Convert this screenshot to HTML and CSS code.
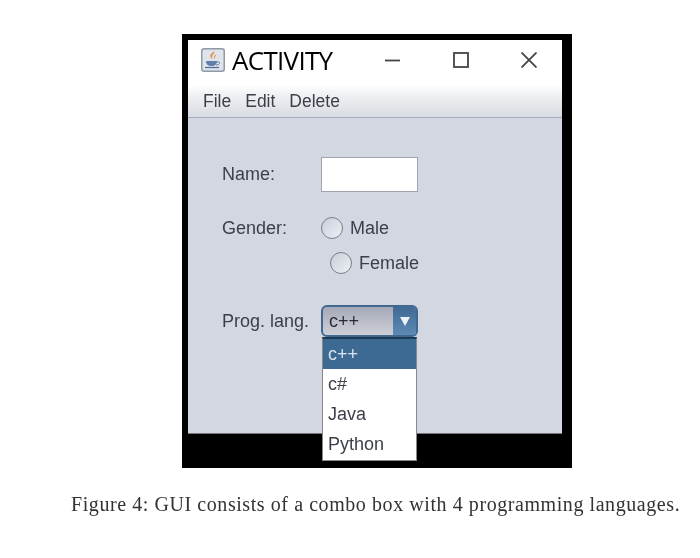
FILE: index.html
```html
<!DOCTYPE html>
<html lang="en">
<head>
    <meta charset="UTF-8">
    <title>ACTIVITY</title>
    <link rel="stylesheet" href="styles.css">
</head>
<body>
    <div class="window">
        <div class="titlebar">
            <svg class="app-icon" viewBox="0 0 24 24">
                <rect x="0.75" y="0.75" width="22.5" height="22.5" rx="2.5" fill="#dfe3ea" stroke="#8f9aa8" stroke-width="1.5"/>
                <path d="M13 3c1.500 2.500-3 4-2 6.500.4 1 1.200 1.500 1.200 1.500-2-.5-3.200-2-2.800-3.700C9.800 5.500 12.500 5 13 3z" fill="#dd8a3c"/>
                <path d="M15 6.500c.5 1.500-2 2.500-1.300 4.500-1.500-1-1.200-3 1.300-4.500z" fill="#dd8a3c"/>
                <path d="M5 13h11c0 3-2 5-5.500 5S5 16 5 13z" fill="#5f7fa8"/>
                <path d="M16 14c2-.5 3 .3 2.500 1.500-.4 1-2 1.500-3.500 1.500" fill="none" stroke="#5f7fa8" stroke-width="1"/>
                <path d="M4 19.500h14" stroke="#4a6a94" stroke-width="1.200"/>
            </svg>
            <span class="title">ACTIVITY</span>
            <div class="controls">
                <svg class="ctl" viewBox="0 0 16 16"><path d="M0 8.500h15" stroke="#444" stroke-width="1.800"/></svg>
                <svg class="ctl" viewBox="0 0 16 16"><rect x="1" y="1" width="14" height="14" fill="none" stroke="#444" stroke-width="1.800"/></svg>
                <svg class="ctl" viewBox="0 0 16 16"><path d="M0.500 0.500l15 15M15.500 0.500l-15 15" stroke="#444" stroke-width="1.800"/></svg>
            </div>
        </div>
        <div class="menubar">
            <span>File</span>
            <span>Edit</span>
            <span>Delete</span>
        </div>
        <div class="content">
            <div class="row name-row">
                <label class="field-label">Name:</label>
                <div class="textbox"></div>
            </div>
            <div class="row gender-row">
                <label class="field-label">Gender:</label>
                <div class="radio"></div>
                <span>Male</span>
            </div>
            <div class="row female-row">
                <div class="radio"></div>
                <span>Female</span>
            </div>
            <div class="row lang-row">
                <label class="field-label">Prog. lang.</label>
                <div class="combo-wrap">
                    <div class="combo">
                        <span class="combo-value">c++</span>
                        <span class="combo-btn"><i class="arrow"></i></span>
                    </div>
                    <ul class="popup">
                        <li class="selected">c++</li>
                        <li>c#</li>
                        <li>Java</li>
                        <li>Python</li>
                    </ul>
                </div>
            </div>
        </div>
    </div>
    <p class="caption">Figure 4: GUI consists of a combo box with 4 programming languages.</p>
</body>
</html>
```

FILE: styles.css
```css
body {
    margin: 0;
    height: 558px;
    overflow: hidden;
    background-color: #fff;
    font-family: "Liberation Sans", Arial, sans-serif;
    font-size: 18px;
    color: #3c3f4a;
    display: flex;
    flex-direction: column;
    align-items: flex-start;
    padding-top: 34px;
    box-sizing: border-box;
}
.window {
    width: 390px;
    height: 434px;
    margin-left: 182px;
    box-sizing: border-box;
    background-color: #000;
    padding: 6px 10px 34px 6px;
    display: flex;
    flex-direction: column;
    filter: blur(0.5px);
}
.titlebar {
    height: 45px;
    flex: none;
    box-sizing: border-box;
    background-color: #fff;
    display: flex;
    align-items: center;
    padding: 0 0 5px 13px;
}
.app-icon {
    width: 24px;
    height: 24px;
}
.title {
    margin-left: 7px;
    font-family: "Open Sans", sans-serif;
    font-size: 26px;
    letter-spacing: -0.700px;
    line-height: 30px;
    color: #000;
    white-space: nowrap;
}
.controls {
    margin-left: 53px;
    display: flex;
    gap: 52px;
}
.ctl {
    width: 16px;
    height: 16px;
}
.menubar {
    height: 33px;
    flex: none;
    box-sizing: border-box;
    background: linear-gradient(#fff, #f2f3f5 25%, #d8dbe2);
    border-bottom: 1px solid #a6acb8;
    display: flex;
    align-items: center;
    gap: 14px;
    padding-left: 15px;
    font-size: 17.500px;
}
.content {
    flex: 1;
    background-color: #d3d7e1;
    border-bottom: 1px solid #777;
    padding-left: 34px;
    display: flex;
    flex-direction: column;
}
.row {
    display: flex;
    align-items: center;
}
.field-label {
    width: 99px;
    flex: none;
}
.name-row {
    margin-top: 39px;
}
.textbox {
    width: 97px;
    height: 35px;
    box-sizing: border-box;
    background-color: #fff;
    border: 1px solid #a0a4ad;
}
.gender-row {
    margin-top: 25px;
}
.female-row {
    margin-top: 13px;
    padding-left: 108px;
}
.radio {
    width: 22px;
    height: 22px;
    box-sizing: border-box;
    border-radius: 50%;
    border: 1.500px solid #77808e;
    background: linear-gradient(135deg, #c9cdd8, #eef0f4);
    margin-right: 7px;
}
.lang-row {
    margin-top: 31px;
}
.combo-wrap {
    position: relative;
}
.combo {
    width: 97px;
    height: 32px;
    box-sizing: border-box;
    border: 2px solid #41688f;
    border-radius: 6px;
    display: flex;
    overflow: hidden;
    background: linear-gradient(#a5a8b6, #cfd1d8);
    color: #2a2a33;
}
.combo-value {
    flex: 1;
    padding-left: 6px;
    line-height: 29px;
}
.combo-btn {
    width: 23px;
    background: linear-gradient(#3f6a93, #5d8ab3);
    display: flex;
    align-items: center;
    justify-content: center;
}
.arrow {
    width: 0;
    height: 0;
    border-left: 5.500px solid transparent;
    border-right: 5.500px solid transparent;
    border-top: 9px solid #eef2f7;
}
.popup {
    position: absolute;
    left: 1px;
    top: 32px;
    width: 95px;
    height: 124px;
    margin: 0;
    padding: 0;
    list-style: none;
    box-sizing: border-box;
    background-color: #fff;
    border: 1px solid #888;
    border-top: 2px solid #1f3a55;
}
.popup li {
    height: 30px;
    line-height: 30px;
    padding-left: 5px;
}
.popup .selected {
    background-color: #3c6a92;
    color: #d9e4ee;
}
.caption {
    margin: 25px 0 0 71px;
    font-family: "Liberation Serif", "Times New Roman", serif;
    font-size: 20px;
    letter-spacing: 0.570px;
    color: #333;
    white-space: nowrap;
    filter: blur(0.4px);
}
```
